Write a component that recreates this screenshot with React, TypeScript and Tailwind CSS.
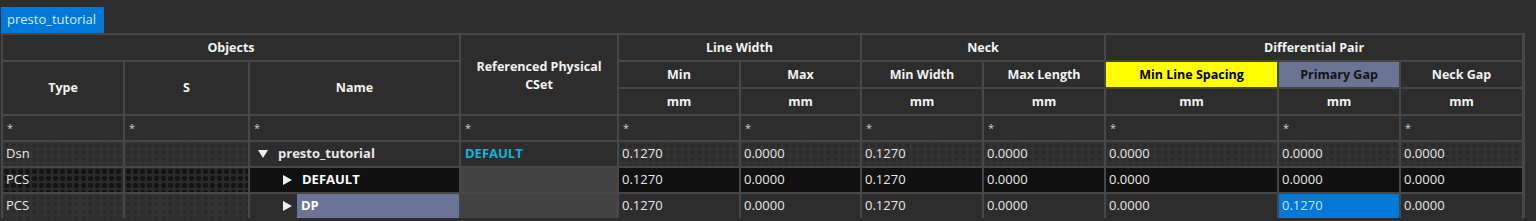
import React from "react"

const cols =
  "grid-cols-[120px_123px_209px_156px_120px_119px_120px_120px_171px_120px_121px]"

const patLight =
  "bg-[#333333] bg-[radial-gradient(circle,#2c2c2c_2.2px,transparent_2.9px)] bg-[length:7px_7px]"
const patDark =
  "bg-[#2a2a2a] bg-[radial-gradient(circle,#141414_2.3px,transparent_3px)] bg-[length:7px_7px]"

function Head({ children, className = "" }: { children?: React.ReactNode; className?: string }) {
  return (
    <div
      className={`flex items-center justify-center whitespace-nowrap bg-[#2d2d2d] text-center text-[12.5px] font-bold leading-[18px] text-[#f2f2f2] ${className}`}
    >
      {children}
    </div>
  )
}

function Cell({ children, className = "bg-[#2d2d2d]" }: { children?: React.ReactNode; className?: string }) {
  return (
    <div className={`flex items-center overflow-hidden whitespace-nowrap pl-[3px] text-[13px] text-[#e8e8e8] ${className}`}>
      {children}
    </div>
  )
}

function Filter() {
  return (
    <div className="flex items-start bg-[#2d2d2d] pl-[4px] pt-[6px] text-[11px] leading-[11px] text-[#d0d0d0]">
      *
    </div>
  )
}

function Down() {
  return (
    <svg width="10" height="8" viewBox="0 0 10 8" className="mr-[10px] shrink-0">
      <polygon points="0,0 10,0 5,8" fill="#f0f0f0" />
    </svg>
  )
}

function Right() {
  return (
    <svg width="9" height="10" viewBox="0 0 9 10" className="shrink-0">
      <polygon points="0,0 9,5 0,10" fill="#f0f0f0" />
    </svg>
  )
}

const values = ["0.1270", "0.0000", "0.1270", "0.0000", "0.0000", "0.0000", "0.0000"]

export default function App() {
  return (
    <div
      className="h-[221px] w-full overflow-hidden bg-[#2d2d2d]"
      style={{ fontFamily: '"Open Sans", "Noto Sans", sans-serif' }}
    >
      <div className="pt-[7px] pl-[1px]">
        <div className="h-[26px] w-[103px] bg-[#0078d7] pl-[6px] text-[13px] leading-[25px] text-[#dcebf8]">
          presto_tutorial
        </div>
      </div>

      <div
        className={`ml-[1px] grid w-[1524px] ${cols} grid-rows-[25px_25px_25px_24px_24px_24px_24px] gap-[2px] bg-[#474747] p-[2px] pb-0`}
      >
        <Head className="col-span-3">Objects</Head>
        <Head className="row-span-3 pt-[2px]">
          <span>
            Referenced Physical
            <br />
            CSet
          </span>
        </Head>
        <Head className="col-span-2">Line Width</Head>
        <Head className="col-span-2">Neck</Head>
        <Head className="col-span-3">Differential Pair</Head>

        <Head className="row-span-2">Type</Head>
        <Head className="row-span-2">S</Head>
        <Head className="row-span-2">Name</Head>
        <Head>Min</Head>
        <Head>Max</Head>
        <Head>Min Width</Head>
        <Head>Max Length</Head>
        <Head className="!bg-[#ffff00] !text-black">Min Line Spacing</Head>
        <Head className="!bg-[#6b7493] !text-[#141414]">Primary Gap</Head>
        <Head>Neck Gap</Head>

        {values.map((_, i) => (
          <Head key={`mm${i}`}>mm</Head>
        ))}

        {Array.from({ length: 11 }).map((_, i) => (
          <Filter key={`f${i}`} />
        ))}

        {/* Dsn row */}
        <Cell className={patLight}>Dsn</Cell>
        <Cell className={patLight} />
        <Cell className="bg-[#2d2d2d] pl-[8px] font-bold">
          <Down />
          presto_tutorial
        </Cell>
        <Cell className="bg-[#2d2d2d] pl-[4px] font-bold text-[#16b4d8]!">DEFAULT</Cell>
        {values.map((v, i) => (
          <Cell key={`d${i}`} className={patLight}>
            {v}
          </Cell>
        ))}

        {/* DEFAULT row */}
        <Cell className={patDark}>PCS</Cell>
        <Cell className={patDark} />
        <Cell className="bg-[#111111] pl-[33px] font-bold text-white">
          <Right />
          <span className="ml-[10px]">DEFAULT</span>
        </Cell>
        <Cell className="bg-[#434343]" />
        {values.map((v, i) => (
          <Cell key={`p${i}`} className="bg-[#111111]">
            {v}
          </Cell>
        ))}

        {/* DP row */}
        <Cell className={patLight}>PCS</Cell>
        <Cell className={patLight} />
        <Cell className="bg-[#2d2d2d] pl-[33px] font-bold text-white">
          <Right />
          <span className="ml-[5px] flex h-full flex-1 items-center bg-[#6b7494] pl-[4px]">DP</span>
        </Cell>
        <Cell className="bg-[#434343]" />
        {values.map((v, i) => (
          <Cell
            key={`q${i}`}
            className={i === 5 ? "bg-[#0078d7] text-[#cfe5fb]!" : "bg-[#2d2d2d]"}
          >
            {i === 5 ? "0.1270" : v}
          </Cell>
        ))}
      </div>
    </div>
  )
}
